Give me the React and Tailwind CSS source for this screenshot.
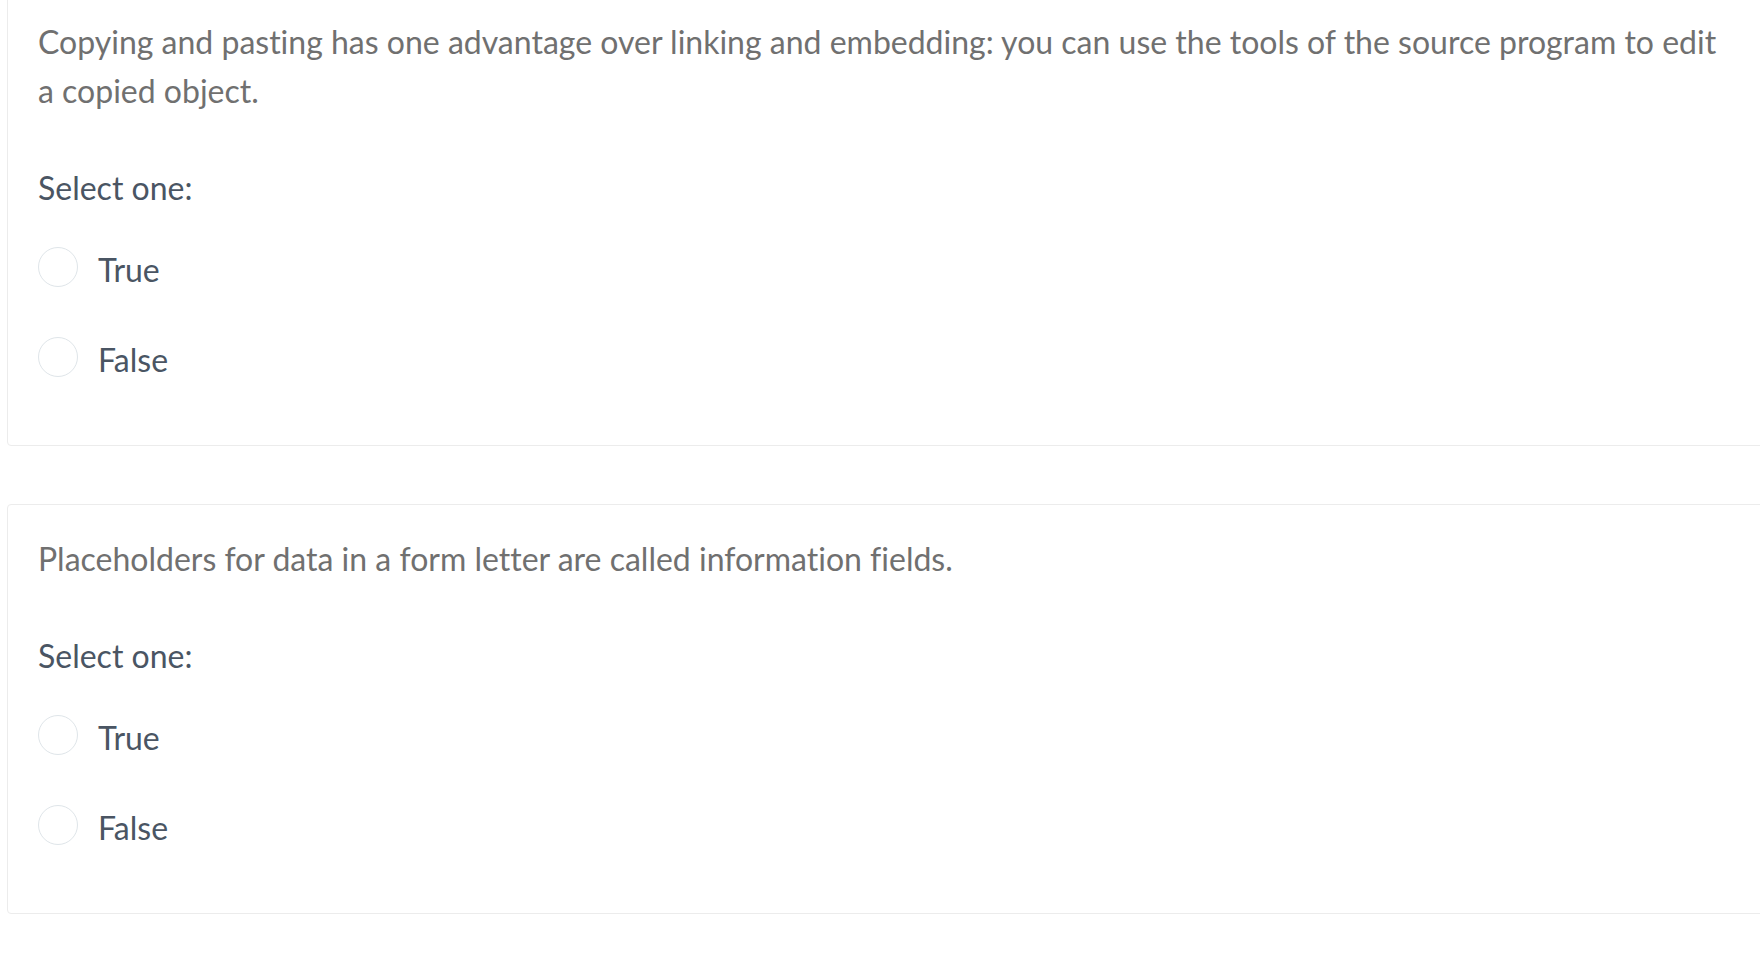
const questions = [
  {
    id: 1,
    text: "Copying and pasting has one advantage over linking and embedding: you can use the tools of the source program to edit a copied object.",
  },
  {
    id: 2,
    text: "Placeholders for data in a form letter are called information fields.",
  },
]

const Radio = ({ label }) => {
  return (
    <label className="flex items-center h-[40px] gap-[20px] cursor-pointer">
      <span className="w-[40px] h-[40px] rounded-full border-[1.5px] border-[#dfe5e9] bg-white shrink-0" />
      <span className="text-[#4a5563] mt-[5px]">{label}</span>
    </label>
  )
}

const QuestionCard = ({ text, first }) => {
  return (
    <section
      className={`border border-[#ececec] rounded-[4px] pl-[30px] pt-[29px] pb-[68px] mr-[-40px] ${first ? "-mt-[13px]" : "mt-[58px]"}`}
    >
      <p className="text-[#707070] max-w-[1695px]">{text}</p>
      <p className="mt-[48px] text-[#4a5563]">Select one:</p>
      <div className="flex flex-col gap-[50px] mt-[35px]">
        <Radio label="True" />
        <Radio label="False" />
      </div>
    </section>
  )
}

const App = () => {
  return (
    <main
      className="w-full h-[968px] overflow-hidden bg-white pl-[7px] text-[32px] leading-[49px] [font-variant-ligatures:none]"
      style={{ fontFamily: '"Lato", "Noto Sans", sans-serif' }}
    >
      {questions.map((q, i) => (
        <QuestionCard key={q.id} text={q.text} first={i === 0} />
      ))}
    </main>
  )
}

export default App
